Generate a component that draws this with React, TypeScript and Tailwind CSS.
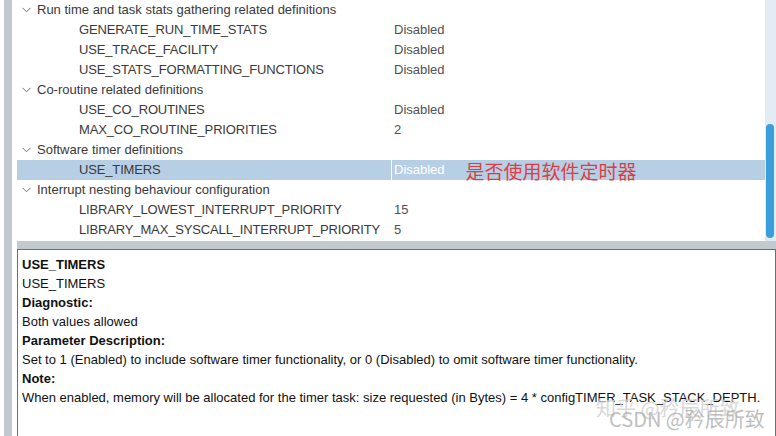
const font = { fontFamily: '"Liberation Sans", Arial, sans-serif' };

type Row =
  | { kind: "group"; label: string }
  | { kind: "item"; label: string; value: string; selected?: boolean };

const rows: Row[] = [
  { kind: "group", label: "Run time and task stats gathering related definitions" },
  { kind: "item", label: "GENERATE_RUN_TIME_STATS", value: "Disabled" },
  { kind: "item", label: "USE_TRACE_FACILITY", value: "Disabled" },
  { kind: "item", label: "USE_STATS_FORMATTING_FUNCTIONS", value: "Disabled" },
  { kind: "group", label: "Co-routine related definitions" },
  { kind: "item", label: "USE_CO_ROUTINES", value: "Disabled" },
  { kind: "item", label: "MAX_CO_ROUTINE_PRIORITIES", value: "2" },
  { kind: "group", label: "Software timer definitions" },
  { kind: "item", label: "USE_TIMERS", value: "Disabled", selected: true },
  { kind: "group", label: "Interrupt nesting behaviour configuration" },
  { kind: "item", label: "LIBRARY_LOWEST_INTERRUPT_PRIORITY", value: "15" },
  { kind: "item", label: "LIBRARY_MAX_SYSCALL_INTERRUPT_PRIORITY", value: "5" },
];

function Chevron() {
  return (
    <svg width="9" height="6" viewBox="0 0 9 6" className="shrink-0">
      <polyline points="0.5,0.8 4.5,4.8 8.5,0.8" fill="none" stroke="#707070" strokeWidth="1" />
    </svg>
  );
}

export default function App() {
  return (
    <div className="relative flex w-[776px] h-[436px] overflow-hidden bg-white" style={font}>
      {/* left gutter */}
      <div className="flex shrink-0 pl-[4px] pr-[5px]">
        <div className="w-[8px] bg-[#c3cacf]" />
      </div>

      <div className="flex flex-1 flex-col">
        {/* tree */}
        <div className="flex h-[241px]">
          <div className="flex-1 text-[13px] text-[#3a3a3a]">
            {rows.map((r, i) =>
              r.kind === "group" ? (
                <div key={i} className="flex h-5 items-center pl-[5px]">
                  <Chevron />
                  <span className="ml-[6px]">{r.label}</span>
                </div>
              ) : (
                <div
                  key={i}
                  className={`flex h-5 items-center ${r.selected ? "bg-[#b7cfe5]" : ""}`}
                >
                  <span className="w-[374px] shrink-0 pl-[62px] tracking-[-0.15px]">{r.label}</span>
                  <span
                    className={`flex h-full items-center pl-[2px] ${
                      r.selected ? "border-l border-white text-white" : "border-l border-transparent text-[#505050]"
                    }`}
                  >
                    {r.value}
                  </span>
                  {r.selected && (
                    <span
                      className="ml-[21px] text-[19px] leading-none text-[#dd3c44]"
                      style={{ fontFamily: '"Noto Sans CJK SC", sans-serif' }}
                    >
                      是否使用软件定时器
                    </span>
                  )}
                </div>
              )
            )}
          </div>
          {/* scrollbar */}
          <div className="flex w-[11px] shrink-0 flex-col bg-[#e3ecf5] pl-[1px] pr-[2px]">
            <div className="h-[124px]" />
            <div className="h-[114px] rounded-full bg-[#3a9edb]" />
          </div>
        </div>

        {/* splitter */}
        <div className="h-[8px] bg-[#c3cacf]" />

        {/* description */}
        <div className="flex-1 border-l border-t border-r border-[#6e6e6e] px-[4px] pt-[5px] text-[13px] leading-[19px] text-[#111]">
          <div className="font-bold">USE_TIMERS</div>
          <div>USE_TIMERS</div>
          <div className="font-bold">Diagnostic:</div>
          <div>Both values allowed</div>
          <div className="font-bold">Parameter Description:</div>
          <div className="whitespace-nowrap">
            Set to 1 (Enabled) to include software timer functionality, or 0 (Disabled) to omit software timer
            functionality.
          </div>
          <div className="font-bold">Note:</div>
          <div className="whitespace-nowrap">
            When enabled, memory will be allocated for the timer task: size requested (in Bytes) = 4 *
            configTIMER_TASK_STACK_DEPTH.
          </div>
        </div>
      </div>

      {/* watermarks */}
      <div
        className="pointer-events-none absolute left-[596px] top-[398px] text-[20px] leading-none text-[#d0d0d0] opacity-80"
        style={{ fontFamily: '"Noto Sans CJK SC", sans-serif' }}
      >
        知乎 @矜辰所致
      </div>
      <div
        className="pointer-events-none absolute left-[609px] top-[409px] text-[20px] leading-none text-[#b0b0b0] opacity-80"
        style={{ fontFamily: '"Noto Sans CJK SC", sans-serif' }}
      >
        CSDN @矜辰所致
      </div>
    </div>
  );
}
